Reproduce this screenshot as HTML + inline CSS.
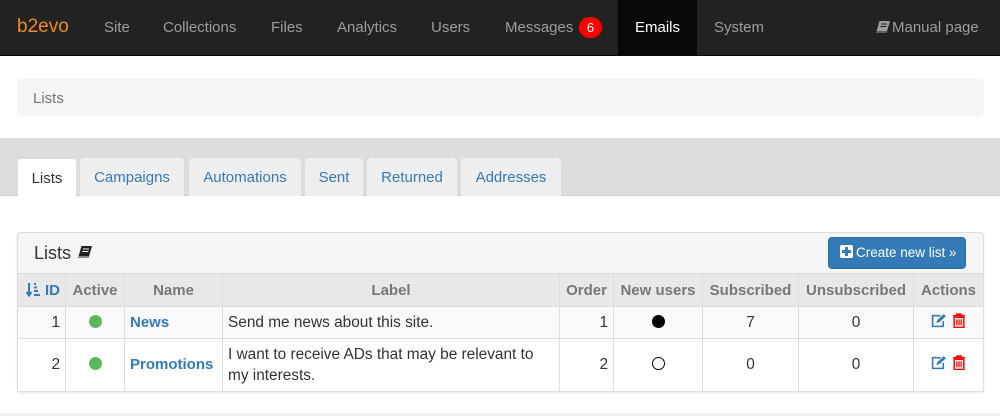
<!DOCTYPE html>
<html><head><meta charset="utf-8"><style>
*{box-sizing:border-box;margin:0;padding:0}
body{width:1000px;height:416px;overflow:hidden;background:#fff;font-family:"Liberation Sans",sans-serif;font-size:14px;color:#333;position:relative}
.nav{position:absolute;left:0;top:0;width:1000px;height:56px;background:#222;border-bottom:1px solid #080808}
.nav span{position:absolute;top:19px;font-size:15px;color:#9d9d9d}
.abs{position:absolute}
.tab{position:absolute;top:158px;height:38px;background:#eee;border-radius:4px 4px 0 0;color:#337ab7;font-size:15px;text-align:center;line-height:40px}
table{position:absolute;left:17px;top:273px;width:967px;border-collapse:collapse;font-size:15.4px}
td,th{border:1px solid #ddd;padding:0 5px}
th{background:#e8e8e8;color:#777;font-size:15px;height:33px;font-weight:bold}
a{color:#337ab7;font-weight:bold;text-decoration:none;font-size:15px}
.r{text-align:right}.c{text-align:center}
.dot{display:inline-block;width:13px;height:13px;border-radius:50%;vertical-align:-1px}
</style></head><body>
<div class="nav">
<span style="left:17px;color:#f08a24;font-size:19px;top:16px">b2evo</span>
<span style="left:104px">Site</span>
<span style="left:163px">Collections</span>
<span style="left:271px">Files</span>
<span style="left:337px">Analytics</span>
<span style="left:431px">Users</span>
<span style="left:505px">Messages</span>
<span style="left:579px;top:17px;width:23px;height:21px;border-radius:11px;background:#f00;color:#fff;font-size:13px;text-align:center;line-height:21px">6</span>
<div class="abs" style="left:618px;top:0;width:79px;height:55px;background:#080808"></div>
<span style="left:635px;color:#fff">Emails</span>
<span style="left:714px">System</span>
<svg class="abs" style="left:875px;top:20px" width="16" height="15" viewBox="0 0 16 15"><path d="M4.5 1h10.5l-3.5 12H1z" fill="#9d9d9d"/><path d="M1.5 12h10" stroke="#222" stroke-width="1"/><path d="M6 4h6M5.3 6.5h6" stroke="#222" stroke-width="1"/></svg>
<span style="left:892px">Manual page</span>
</div>
<div class="abs" style="left:17px;top:78px;width:967px;height:38px;background:#f5f5f5;border-radius:4px;color:#777;font-size:15px;padding:12px 0 0 16px">Lists</div>
<div class="abs" style="left:0;top:138px;width:1000px;height:58px;background:#ddd;border-bottom:1px solid #ccc"></div>
<div class="tab" style="left:17px;width:60px;background:#fff;color:#333;height:39px;border:1px solid #ddd;border-bottom:none">Lists</div>
<div class="tab" style="left:80px;width:104px">Campaigns</div>
<div class="tab" style="left:189px;width:112px">Automations</div>
<div class="tab" style="left:305px;width:58px">Sent</div>
<div class="tab" style="left:367px;width:90px">Returned</div>
<div class="tab" style="left:461px;width:100px">Addresses</div>
<div class="abs" style="left:17px;top:232px;width:967px;height:160px;border:1px solid #ddd;border-radius:4px;background:#f5f5f5;box-shadow:0 1px 2px rgba(0,0,0,.1)"></div>
<div class="abs" style="left:34px;top:243px;font-size:18px;color:#333">Lists</div>
<svg class="abs" style="left:77px;top:245px" width="16" height="15" viewBox="0 0 16 15"><path d="M4.5 1h10.5l-3.5 12H1z" fill="#222"/><path d="M1.5 12h10" stroke="#f5f5f5" stroke-width="1"/><path d="M6 4h6M5.3 6.5h6" stroke="#f5f5f5" stroke-width="1"/></svg>
<div class="abs" style="left:828px;top:237px;width:138px;height:32px;background:#337ab7;border:1px solid #2e6da4;border-radius:4px;color:#fff;font-size:13.5px;line-height:30px;padding-left:27px">Create new list »</div>
<div class="abs" style="left:840px;top:245px;width:13px;height:13px;background:#fff;border-radius:2px"></div>
<div class="abs" style="left:842px;top:250px;width:9px;height:3px;background:#337ab7"></div>
<div class="abs" style="left:845px;top:247px;width:3px;height:9px;background:#337ab7"></div>
<table>
<tr><th style="width:48px;color:#337ab7;text-align:right;white-space:nowrap"><svg width="15" height="15" viewBox="0 0 15 15" style="vertical-align:-2px"><path d="M3 1v12M0.5 10L3 13.5 5.5 10" stroke="#337ab7" stroke-width="2" fill="none"/><path d="M8 2h2M8 5.5h3M8 9h4M8 13h6" stroke="#337ab7" stroke-width="2"/></svg> ID</th><th style="width:59px">Active</th><th style="width:98px">Name</th><th>Label</th><th style="width:54px">Order</th><th style="width:89px">New users</th><th style="width:96px">Subscribed</th><th style="width:115px">Unsubscribed</th><th style="width:70px">Actions</th></tr>
<tr style="height:32px;background:#f9f9f9"><td class="r">1</td><td class="c"><span class="dot" style="background:#5cb85c"></span></td><td><a>News</a></td><td>Send me news about this site.</td><td class="r">1</td><td class="c"><span class="dot" style="background:#000;width:13px;height:13px"></span></td><td class="c">7</td><td class="c">0</td><td class="c"><svg width="16" height="15" viewBox="0 0 15 14"><path d="M9 2.5H1.5v10h10V7.5" stroke="#337ab7" stroke-width="1.5" fill="none"/><path d="M5 9.5l1-3 6-5.5 2 2-6 5.5z" fill="#337ab7"/></svg> <svg width="14" height="15" viewBox="0 0 13 14"><path d="M1 2.5h11M4.5 2.5V1h4v1.5M2 4h9v9.5H2z" stroke="#f00" stroke-width="1.4" fill="none"/><path d="M4.5 6v5.5M6.5 6v5.5M8.5 6v5.5" stroke="#f00" stroke-width="1.2"/></svg></td></tr>
<tr style="height:53px;background:#fff"><td class="r">2</td><td class="c"><span class="dot" style="background:#5cb85c"></span></td><td><a>Promotions</a></td><td style="line-height:21px">I want to receive ADs that may be relevant to my interests.</td><td class="r">2</td><td class="c"><span class="dot" style="border:1.5px solid #000;width:13px;height:13px"></span></td><td class="c">0</td><td class="c">0</td><td class="c"><svg width="16" height="15" viewBox="0 0 15 14"><path d="M9 2.5H1.5v10h10V7.5" stroke="#337ab7" stroke-width="1.5" fill="none"/><path d="M5 9.5l1-3 6-5.5 2 2-6 5.5z" fill="#337ab7"/></svg> <svg width="14" height="15" viewBox="0 0 13 14"><path d="M1 2.5h11M4.5 2.5V1h4v1.5M2 4h9v9.5H2z" stroke="#f00" stroke-width="1.4" fill="none"/><path d="M4.5 6v5.5M6.5 6v5.5M8.5 6v5.5" stroke="#f00" stroke-width="1.2"/></svg></td></tr>
</table>
<div class="abs" style="left:0;top:413px;width:1000px;height:3px;background:#f0f0f0"></div>
</body></html>
